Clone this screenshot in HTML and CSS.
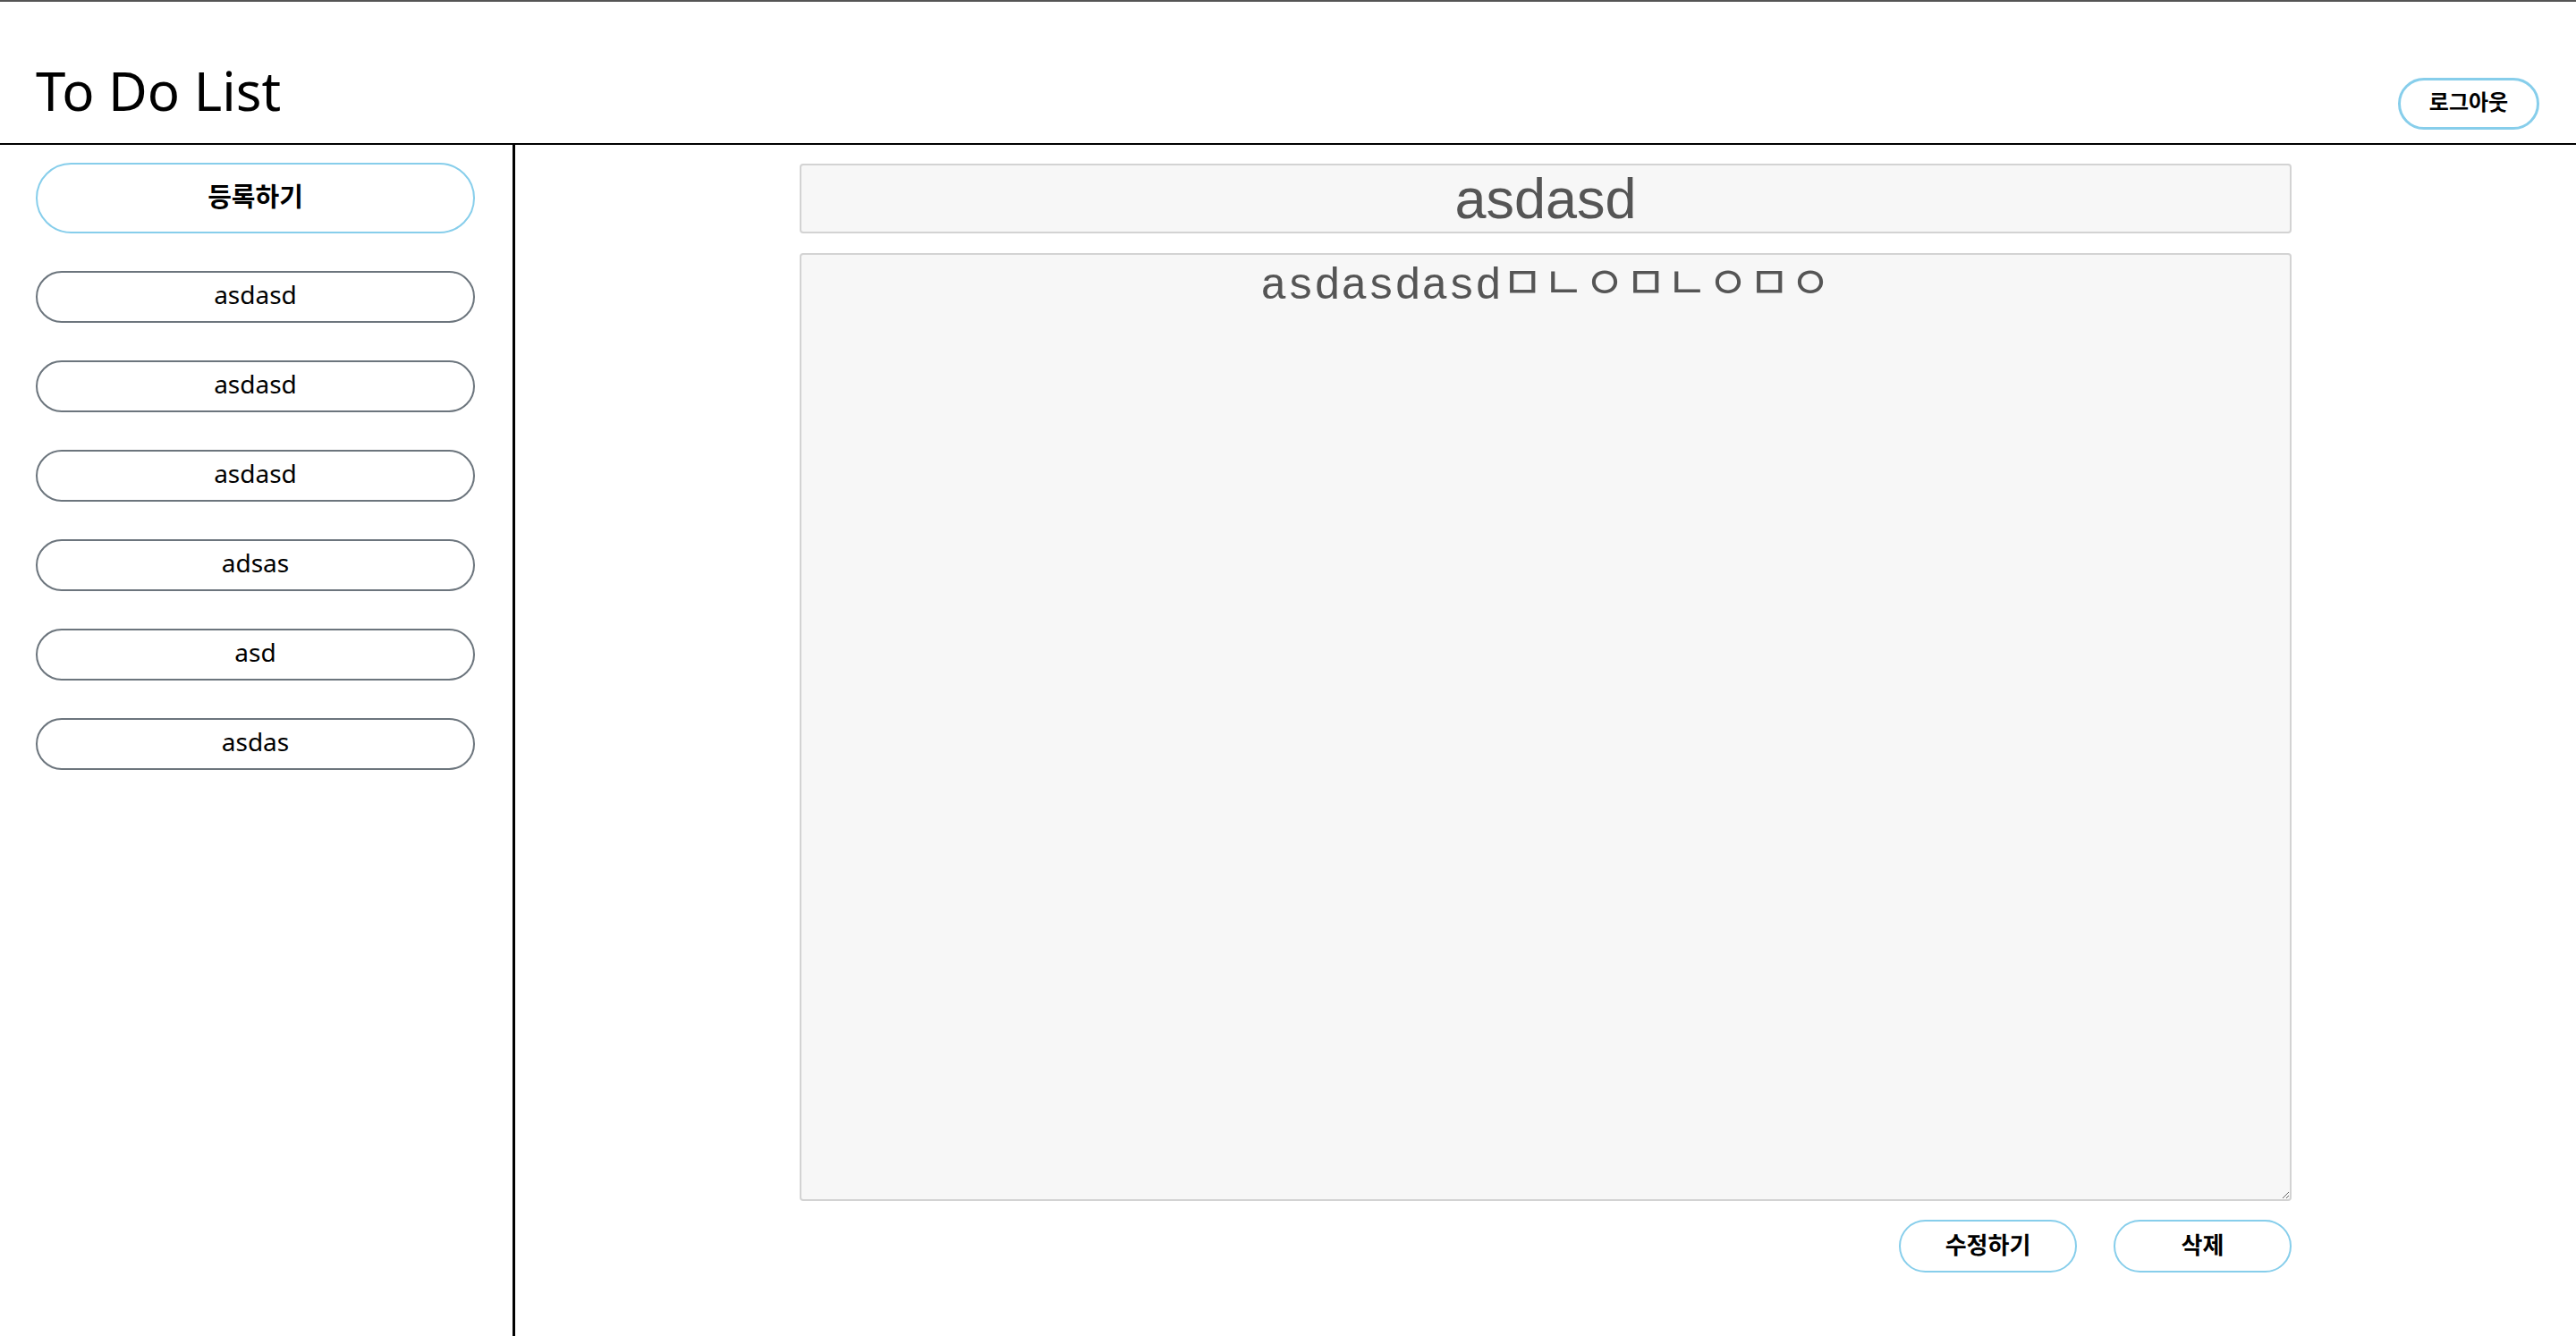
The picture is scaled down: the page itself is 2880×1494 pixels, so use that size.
FILE: index.html
```html
<!DOCTYPE html>
<html lang="ko">
<head>
    <meta charset="UTF-8">
    <meta name="viewport" content="width=device-width, initial-scale=1.0">
    <title>To Do List</title>
    <link rel="stylesheet" href="styles.css">
</head>
<body>
    <header class="header">
        <h1 class="logo">To Do List</h1>
        <button class="logout">로그아웃</button>
    </header>
    <div class="container">
        <aside class="sidebar">
            <button class="add-btn">등록하기</button>
            <ul class="todo-list">
                <li><button class="todo-item">asdasd</button></li>
                <li><button class="todo-item">asdasd</button></li>
                <li><button class="todo-item">asdasd</button></li>
                <li><button class="todo-item">adsas</button></li>
                <li><button class="todo-item">asd</button></li>
                <li><button class="todo-item">asdas</button></li>
            </ul>
        </aside>
        <main class="main">
            <div class="detail">
                <input type="text" class="title-input" value="asdasd">
                <textarea class="content-input">asdasdasdㅁㄴㅇㅁㄴㅇㅁㅇ</textarea>
                <div class="actions">
                    <button class="action-btn">수정하기</button>
                    <button class="action-btn">삭제</button>
                </div>
            </div>
        </main>
    </div>
</body>
</html>
```

FILE: styles.css
```css
*{
    margin: 0;
    padding: 0;
    box-sizing: border-box;
}
body{
    font-family: "Noto Sans", "Noto Sans CJK KR", sans-serif;
    color: #000;
    background-color: #fff;
}
button{
    font-family: "Noto Sans CJK KR", "Noto Sans", sans-serif;
    background-color: #fff;
    color: #000;
    padding-bottom: 7px;
    cursor: pointer;
}
.header{
    height: 162px;
    border-top: 2px solid #555;
    border-bottom: 2px solid #000;
    display: flex;
    justify-content: space-between;
    align-items: flex-end;
    padding: 0 41px 15px 40px;
}
.logo{
    font-family: "Noto Sans", sans-serif;
    font-size: 60px;
    font-weight: 400;
    margin-bottom: 3px;
}
.logout{
    width: 158px;
    height: 58px;
    border: 3px solid skyblue;
    border-radius: 29px;
    font-size: 24px;
    font-weight: 700;
}
.container{
    display: flex;
    height: calc(100vh - 162px);
}
.sidebar{
    width: 576px;
    border-right: 3px solid #000;
    padding: 20px 42px 0 40px;
}
.add-btn{
    width: 100%;
    height: 79px;
    border: 2px solid skyblue;
    border-radius: 40px;
    font-size: 29px;
    font-weight: 700;
}
.todo-list{
    list-style: none;
    margin-top: 42px;
    display: flex;
    flex-direction: column;
    gap: 42px;
}
.todo-item{
    width: 100%;
    height: 58px;
    border: 2px solid #6c757d;
    border-radius: 29px;
    font-family: "Noto Sans", "Noto Sans CJK KR", sans-serif;
    font-size: 28px;
}
.main{
    flex: 1;
    display: flex;
    justify-content: center;
}
.detail{
    width: 1668px;
    padding-top: 21px;
    display: flex;
    flex-direction: column;
}
.title-input{
    height: 78px;
    background-color: #f7f7f7;
    border: 2px solid #d3d3d3;
    border-radius: 4px;
    outline: none;
    text-align: center;
    font-family: "Liberation Sans", Arial, sans-serif;
    font-size: 63px;
    color: #555;
}
.content-input{
    margin-top: 22px;
    height: 1060px;
    background-color: #f7f7f7;
    border: 2px solid #d3d3d3;
    border-radius: 4px;
    outline: none;
    padding: 2px;
    text-align: center;
    font-family: "Liberation Mono", "Noto Sans CJK KR", monospace;
    font-size: 50px;
    line-height: 1.35;
    color: #555;
}
.actions{
    margin-top: 21px;
    display: flex;
    justify-content: flex-end;
    gap: 41px;
}
.action-btn{
    width: 199px;
    height: 59px;
    border: 2px solid skyblue;
    border-radius: 30px;
    font-size: 26px;
    font-weight: 700;
}
```
